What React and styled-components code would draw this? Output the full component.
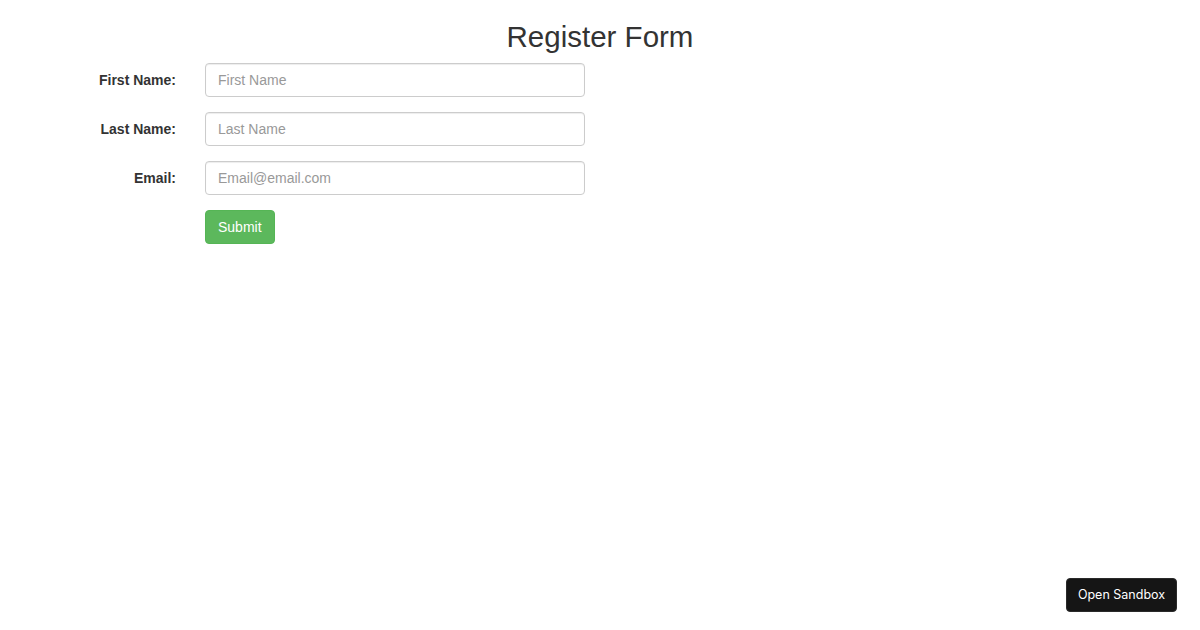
import React from "react";
import styled, { createGlobalStyle } from "styled-components";

const Global = createGlobalStyle`
  html, body { margin: 0; padding: 0; background: #fff; }
  body {
    font-family: "Liberation Sans", Arial, Helvetica, sans-serif;
    font-size: 14px;
    line-height: 1.42857;
    color: #333;
  }
  * { box-sizing: border-box; }
`;

const Page = styled.div`
  width: 1200px;
  height: 630px;
  display: flow-root;
`;

const Title = styled.h2`
  margin: 20px 0 10px;
  height: 33px;
  font-size: 29.5px;
  font-weight: 500;
  line-height: 33px;
  text-align: center;
  color: #333;
`;

const Form = styled.form`
  display: grid;
  grid-template-columns: 176px 380px;
  column-gap: 29px;
  row-gap: 15px;
  align-items: start;
`;

const Label = styled.label`
  padding-top: 8px;
  text-align: right;
  font-weight: bold;
  white-space: nowrap;
`;

const Input = styled.input`
  display: block;
  width: 100%;
  height: 34px;
  padding: 6px 12px;
  font-family: inherit;
  font-size: 14px;
  line-height: 1.42857;
  color: #555;
  background: #fff;
  border: 1px solid #ccc;
  border-radius: 4px;
  box-shadow: inset 0 1px 1px rgba(0, 0, 0, 0.075);
  outline: none;
  &::placeholder { color: #999; }
`;

const Button = styled.button`
  grid-column: 2;
  justify-self: start;
  height: 34px;
  padding: 7px 12px 5px;
  font-family: inherit;
  font-size: 14px;
  line-height: 1.42857;
  color: #fff;
  background: #5cb85c;
  border: 1px solid #55b555;
  border-radius: 4px;
  cursor: pointer;
`;

const SandboxButton = styled.a`
  position: fixed;
  right: 23px;
  bottom: 18px;
  width: 111px;
  height: 34px;
  display: flex;
  align-items: center;
  justify-content: center;
  background: #151515;
  color: #fff;
  border-radius: 4px;
  font-family: Inter, "Liberation Sans", sans-serif;
  font-size: 12.5px;
  text-decoration: none;
  border: 1px solid #2a2a2a;
`;

const fields = [
  { id: "first", label: "First Name:", placeholder: "First Name", type: "text" },
  { id: "last", label: "Last Name:", placeholder: "Last Name", type: "text" },
  { id: "email", label: "Email:", placeholder: "Email@email.com", type: "email" },
];

export default function App() {
  return (
    <Page>
      <Global />
      <Title>Register Form</Title>
      <Form onSubmit={(e) => e.preventDefault()}>
        {fields.map((f) => (
          <React.Fragment key={f.id}>
            <Label htmlFor={f.id}>{f.label}</Label>
            <Input id={f.id} type={f.type} placeholder={f.placeholder} />
          </React.Fragment>
        ))}
        <Button type="submit">Submit</Button>
      </Form>
      <SandboxButton href="#">Open Sandbox</SandboxButton>
    </Page>
  );
}
